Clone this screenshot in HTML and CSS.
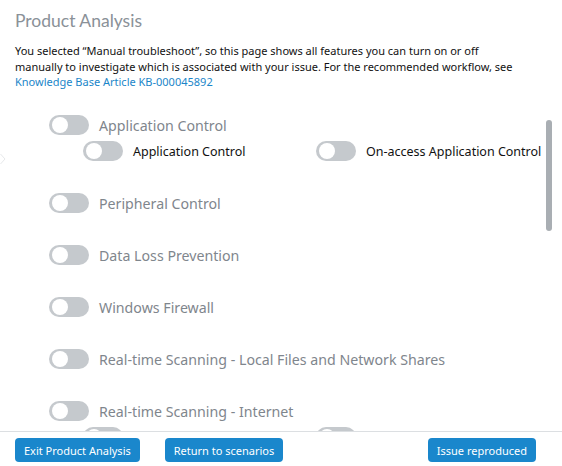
FILE: index.html
```html
<!DOCTYPE html>
<html>
<head>
<meta charset="utf-8">
<link rel="stylesheet" href="styles.css">
</head>
<body>
<div class="page">
  <header class="head">
    <h1 class="title">Product Analysis</h1>
    <p class="intro">You selected “Manual troubleshoot”, so this page shows all features you can turn on or off<br>manually to investigate which is associated with your issue. For the recommended workflow, see <a class="link" href="#">Knowledge Base Article KB-000045892</a></p>
  </header>
  <main class="scroll">
    <svg class="chev" width="6" height="12" viewBox="0 0 6 12"><path d="M0.5 1 L5 6 L0.5 11" fill="none" stroke="#e6e8ea" stroke-width="1"/></svg>
    <div class="list">
      <div class="feature">
        <div class="row"><span class="toggle"></span><span class="label">Application Control</span></div>
        <div class="subrow">
          <div class="sub"><span class="toggle"></span><span class="sublabel">Application Control</span></div>
          <div class="sub"><span class="toggle"></span><span class="sublabel">On-access Application Control</span></div>
        </div>
      </div>
      <div class="feature">
        <div class="row"><span class="toggle"></span><span class="label">Peripheral Control</span></div>
      </div>
      <div class="feature">
        <div class="row"><span class="toggle"></span><span class="label">Data Loss Prevention</span></div>
      </div>
      <div class="feature">
        <div class="row"><span class="toggle"></span><span class="label">Windows Firewall</span></div>
      </div>
      <div class="feature">
        <div class="row"><span class="toggle"></span><span class="label">Real-time Scanning - Local Files and Network Shares</span></div>
      </div>
      <div class="feature">
        <div class="row"><span class="toggle"></span><span class="label">Real-time Scanning - Internet</span></div>
        <div class="subrow">
          <div class="sub"><span class="toggle"></span></div>
          <div class="sub"><span class="toggle"></span></div>
        </div>
      </div>
    </div>
    <div class="scrollbar"></div>
  </main>
  <footer class="foot">
    <button class="btn">Exit Product Analysis</button>
    <button class="btn">Return to scenarios</button>
    <span class="spacer"></span>
    <button class="btn">Issue reproduced</button>
  </footer>
</div>
</body>
</html>
```
FILE: styles.css
```css
html, body {
  margin: 0;
  padding: 0;
  background: #fff;
}
.page {
  width: 562px;
  height: 466px;
  display: flex;
  flex-direction: column;
  font-family: "Noto Sans", "Open Sans", sans-serif;
  overflow: hidden;
}
.head {
  padding: 8px 15px 0 15px;
  height: 87px;
  box-sizing: border-box;
}
.title {
  margin: 0;
  font-family: Lato, "Noto Sans", sans-serif;
  font-weight: 400;
  font-size: 17.5px;
  line-height: 26px;
  color: #8a9198;
}
.intro {
  margin: 9px 0 0 0;
  font-size: 11px;
  line-height: 15.5px;
  color: #111;
}
.link {
  display: block;
  width: max-content;
  color: #1b86c9;
  text-decoration: none;
}
.scroll {
  flex: 1;
  position: relative;
  overflow: hidden;
}
.chev {
  position: absolute;
  left: 0;
  top: 66px;
}
.list {
  padding: 12px 0 0 49px;
}
.feature {
  padding: 16px 0;
}
.row {
  display: flex;
  align-items: center;
  height: 20px;
}
.toggle {
  width: 40px;
  height: 20px;
  border-radius: 10px;
  background: #c5c9cd;
  position: relative;
  flex: none;
}
.toggle::after {
  content: "";
  position: absolute;
  left: 3px;
  top: 2px;
  width: 16px;
  height: 16px;
  border-radius: 50%;
  background: #fff;
}
.label {
  margin-left: 10px;
  font-size: 14.2px;
  color: #7f868d;
}
.subrow {
  display: flex;
  margin: 6px 0 0 34px;
}
.sub {
  display: flex;
  align-items: center;
  height: 20px;
  width: 233px;
}
.sublabel {
  margin-left: 10px;
  font-size: 12.5px;
  color: #111;
}
.scrollbar {
  position: absolute;
  right: 10px;
  top: 33px;
  width: 6px;
  height: 111px;
  border-radius: 3px;
  background: #a9aeb3;
}
.foot {
  height: 35px;
  border-top: 1px solid #dcdfe2;
  box-sizing: border-box;
  display: flex;
  align-items: center;
  padding: 2px 26px 0 15px;
  gap: 25px;
  background: #fff;
}
.spacer {
  flex: 1;
}
.btn {
  border: none;
  border-radius: 4px;
  background: #1a87cc;
  color: #fff;
  font-family: "Noto Sans", "Open Sans", sans-serif;
  font-size: 11px;
  height: 24px;
  padding: 0 9px;
}
```
